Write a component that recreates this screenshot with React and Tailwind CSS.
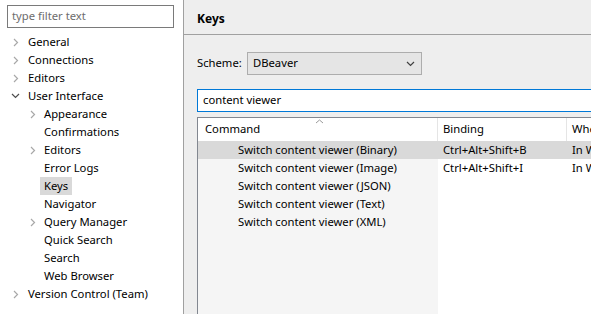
import React from "react";

const Chev = ({ open }) =>
  open ? (
    <svg width="9" height="6" viewBox="0 0 9 6" className="shrink-0">
      <path d="M1 1 L4.5 4.5 L8 1" fill="none" stroke="#4d4d4d" strokeWidth="1.2" />
    </svg>
  ) : (
    <svg width="6" height="9" viewBox="0 0 6 9" className="shrink-0">
      <path d="M1 1 L4.5 4.5 L1 8" fill="none" stroke="#a8a8a8" strokeWidth="1.2" />
    </svg>
  );

const tree = [
  { t: "General", l: 0, c: "closed" },
  { t: "Connections", l: 0, c: "closed" },
  { t: "Editors", l: 0, c: "closed" },
  { t: "User Interface", l: 0, c: "open" },
  { t: "Appearance", l: 1, c: "closed" },
  { t: "Confirmations", l: 1 },
  { t: "Editors", l: 1, c: "closed" },
  { t: "Error Logs", l: 1 },
  { t: "Keys", l: 1, sel: true },
  { t: "Navigator", l: 1 },
  { t: "Query Manager", l: 1, c: "closed" },
  { t: "Quick Search", l: 1 },
  { t: "Search", l: 1 },
  { t: "Web Browser", l: 1 },
  { t: "Version Control (Team)", l: 0, c: "closed" },
];

const rows = [
  { c: "Switch content viewer (Binary)", b: "Ctrl+Alt+Shift+B", w: "In Windows", sel: true },
  { c: "Switch content viewer (Image)", b: "Ctrl+Alt+Shift+I", w: "In Windows" },
  { c: "Switch content viewer (JSON)", b: "", w: "" },
  { c: "Switch content viewer (Text)", b: "", w: "" },
  { c: "Switch content viewer (XML)", b: "", w: "" },
];

export default function App() {
  return (
    <div
      className="w-[591px] h-[314px] flex overflow-hidden text-[11.25px] text-black"
      style={{ fontFamily: '"Noto Sans", "Segoe UI", sans-serif' }}
    >
      {/* Left panel */}
      <div className="w-[184px] shrink-0 bg-white border-r border-[#a0a0a0] flex flex-col">
        <div className="ml-[7px] mt-[5px] w-[167px] h-[23px] border border-[#7a7a7a] flex items-center px-[4px] text-[#6d6d6d]">
          type filter text
        </div>
        <div className="mt-[5px] flex flex-col">
          {tree.map((n, i) => (
            <div key={i} className="h-[18px] flex items-center">
              <div className={n.l === 0 ? "w-[28px] shrink-0 flex justify-center pl-[3px]" : "w-[44px] shrink-0 flex justify-end pr-[8px]"}>
                {n.c === "closed" && <Chev />}
                {n.c === "open" && <Chev open />}
              </div>
              <span
                className={
                  "leading-[18px] whitespace-nowrap " +
                  (n.sel ? "bg-[#d9d9d9] -ml-[4px] px-[4px]" : "")
                }
              >
                {n.t}
              </span>
            </div>
          ))}
        </div>
      </div>

      {/* Right panel */}
      <div className="flex-1 bg-[#eeeeee] flex flex-col min-w-0">
        <div className="h-[35px] shrink-0 border-b border-[#a0a0a0] flex items-center pl-[13px] pt-[4px] font-bold text-[12px]">
          Keys
        </div>
        <div className="pl-[13px] flex flex-col">
          <div className="mt-[17px] flex items-center h-[23px]">
            <span className="w-[50px]">Scheme:</span>
            <div className="w-[175px] h-[23px] bg-[#e5e5e5] border border-[#adadad] flex items-center justify-between pl-[5px] pr-[6px]">
              <span>DBeaver</span>
              <svg width="9" height="6" viewBox="0 0 9 6">
                <path d="M1 1 L4.5 4.5 L8 1" fill="none" stroke="#404040" strokeWidth="1.2" />
              </svg>
            </div>
          </div>
          <div className="mt-[14px] h-[23px] w-[420px] bg-white border border-[#0078d7] flex items-center pl-[5px]">
            content viewer
          </div>
          <div className="mt-[5px] w-[420px] h-[200px] border border-[#828790] bg-white flex flex-col">
            <div className="h-[23px] flex bg-white shrink-0 relative">
              <div className="w-[240px] shrink-0 flex items-center pl-[7px] border-r border-[#e5e5e5]">Command</div>
              <div className="w-[129px] shrink-0 flex items-center pl-[5px] border-r border-[#e5e5e5]">Binding</div>
              <div className="flex-1 flex items-center pl-[5px] whitespace-nowrap">When</div>
              <svg width="9" height="5" viewBox="0 0 9 5" className="absolute left-[117px] top-[1px]">
                <path d="M1 4 L4.5 1 L8 4" fill="none" stroke="#9a9a9a" strokeWidth="1" />
              </svg>
            </div>
            <div className="flex-1 flex relative">
              <div className="w-[240px] shrink-0 bg-[#f5f5f5]" />
              <div className="absolute inset-0 flex flex-col">
                {rows.map((r, i) => (
                  <div key={i} className={"h-[18px] flex items-center whitespace-nowrap " + (r.sel ? "bg-[#d9d9d9]" : "")}>
                    <div className="w-[240px] shrink-0 pl-[40px]">{r.c}</div>
                    <div className="w-[129px] shrink-0 pl-[5px]">{r.b}</div>
                    <div className="flex-1 pl-[5px]">{r.w}</div>
                  </div>
                ))}
              </div>
            </div>
          </div>
        </div>
      </div>
    </div>
  );
}
